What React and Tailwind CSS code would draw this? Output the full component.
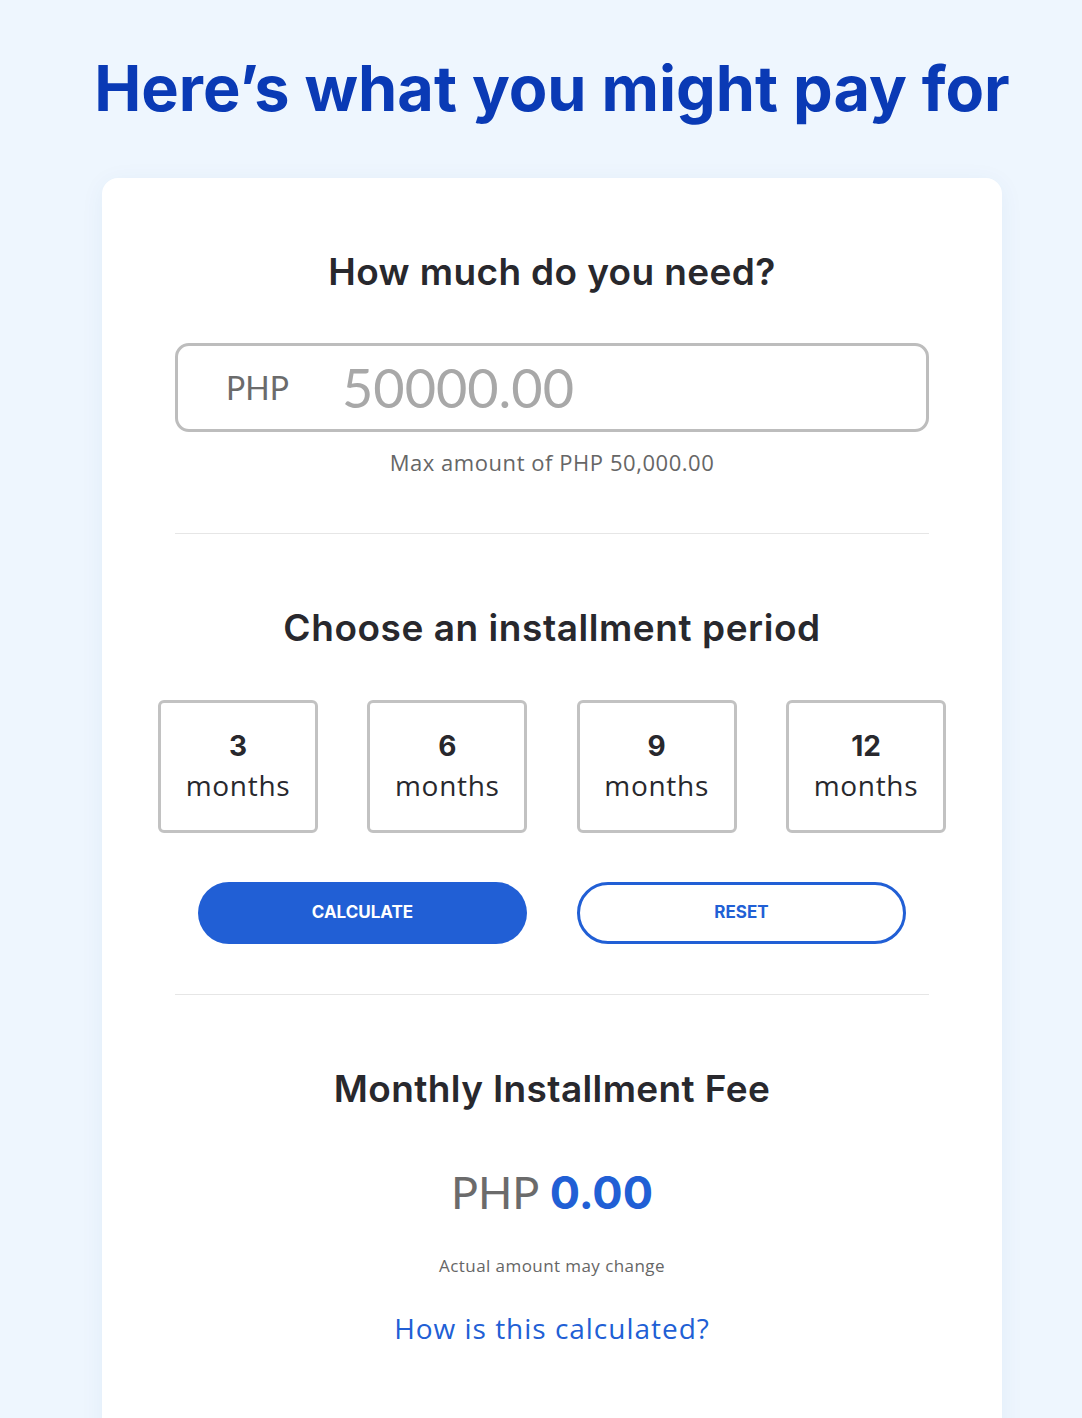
import React, { useState } from 'react';

const periods = [3, 6, 9, 12];

function PeriodButton({ months, active, onClick }) {
  return (
    <button
      onClick={onClick}
      className={`flex h-[133px] w-[160px] flex-col items-center justify-center rounded-md border-[3px] bg-white text-[#28282d] ${
        active ? 'border-[#215fd5]' : 'border-[#c2c2c2]'
      }`}
    >
      <span className="font-[family-name:Inter,sans-serif] text-[28px] font-bold leading-[36px]">{months}</span>
      <span className="text-[28px] leading-[42px] tracking-wide">months</span>
    </button>
  );
}

export default function App() {
  const [amount, setAmount] = useState('');
  const [period, setPeriod] = useState(null);
  const [fee, setFee] = useState(0);

  const calculate = () => {
    const value = Math.min(parseFloat(amount) || 0, 50000);
    if (!period) return;
    setFee(value / period);
  };

  const reset = () => {
    setAmount('');
    setPeriod(null);
    setFee(0);
  };

  return (
    <div className="min-h-screen overflow-hidden bg-[#eef6fe] pl-[22px] pt-[52px] font-[family-name:'Open_Sans',sans-serif]">
      <h1 className="text-center font-[family-name:Inter,sans-serif] text-[63px] font-bold leading-[72px] text-[#0a3ab5]">
        Here’s what you might pay for
      </h1>

      <div className="mx-auto mt-[54px] w-[900px] rounded-2xl bg-white pb-[120px] pt-[68px] shadow-[0_4px_24px_rgba(30,80,160,0.06)]">
        {/* amount */}
        <h2 className="text-center font-[family-name:Inter,sans-serif] text-[37px] font-semibold leading-[52px] tracking-[0.01em] text-[#28282d]">
          How much do you need?
        </h2>

        <div className="mx-[73px] mt-[45px]">
          <label className="flex h-[89px] items-center rounded-[14px] border-[3px] border-[#bdbdbd] pl-[48px] pr-6">
            <span className="w-[116px] shrink-0 font-[family-name:Lato,sans-serif] text-[32px] text-[#6b6b6b]">PHP</span>
            <input
              value={amount}
              onChange={(e) => setAmount(e.target.value)}
              placeholder="50000.00"
              className="w-full bg-transparent font-[family-name:Lato,sans-serif] text-[54px] text-[#555] outline-none placeholder:text-[#a8a8a8]"
            />
          </label>
          <p className="mt-[14px] text-center text-[22px] tracking-wide text-[#666]">
            Max amount of PHP 50,000.00
          </p>
          <hr className="mt-[54px] border-[#e6e6e6]" />
        </div>

        {/* period */}
        <h2 className="mt-[72px] text-center font-[family-name:Inter,sans-serif] text-[37px] font-semibold leading-[44px] tracking-[0.015em] text-[#28282d]">
          Choose an installment period
        </h2>

        <div className="mx-[56px] mt-[50px] flex justify-between">
          {periods.map((m) => (
            <PeriodButton key={m} months={m} active={period === m} onClick={() => setPeriod(m)} />
          ))}
        </div>

        <div className="mt-[49px] flex justify-center gap-[50px]">
          <button
            onClick={calculate}
            className="h-[62px] w-[329px] rounded-full bg-[#215fd5] font-[family-name:Inter,sans-serif] text-[17px] font-bold uppercase text-white"
          >
            Calculate
          </button>
          <button
            onClick={reset}
            className="h-[62px] w-[329px] rounded-full border-[3px] border-[#215fd5] bg-white font-[family-name:Inter,sans-serif] text-[17px] font-bold uppercase text-[#215fd5]"
          >
            Reset
          </button>
        </div>

        <div className="mx-[73px]">
          <hr className="mt-[50px] border-[#e6e6e6]" />
        </div>

        {/* result */}
        <h2 className="mt-[72px] text-center font-[family-name:Inter,sans-serif] text-[37px] font-semibold leading-[44px] tracking-[0.01em] text-[#28282d]">
          Monthly Installment Fee
        </h2>

        <p className="mt-[53px] text-center leading-[56px]">
          <span className="font-[family-name:Lato,sans-serif] text-[45px] text-[#6b6b6b]">PHP </span>
          <span className="font-[family-name:Inter,sans-serif] text-[45px] font-bold text-[#215fd5]">
            {fee.toFixed(2)}
          </span>
        </p>

        <p className="mt-[22px] text-center text-[17px] tracking-wide text-[#666]">
          Actual amount may change
        </p>

        <p className="mt-[28px] text-center">
          <a href="#" className="text-[28px] tracking-[0.035em] text-[#215fd5]">
            How is this calculated?
          </a>
        </p>
      </div>
    </div>
  );
}
